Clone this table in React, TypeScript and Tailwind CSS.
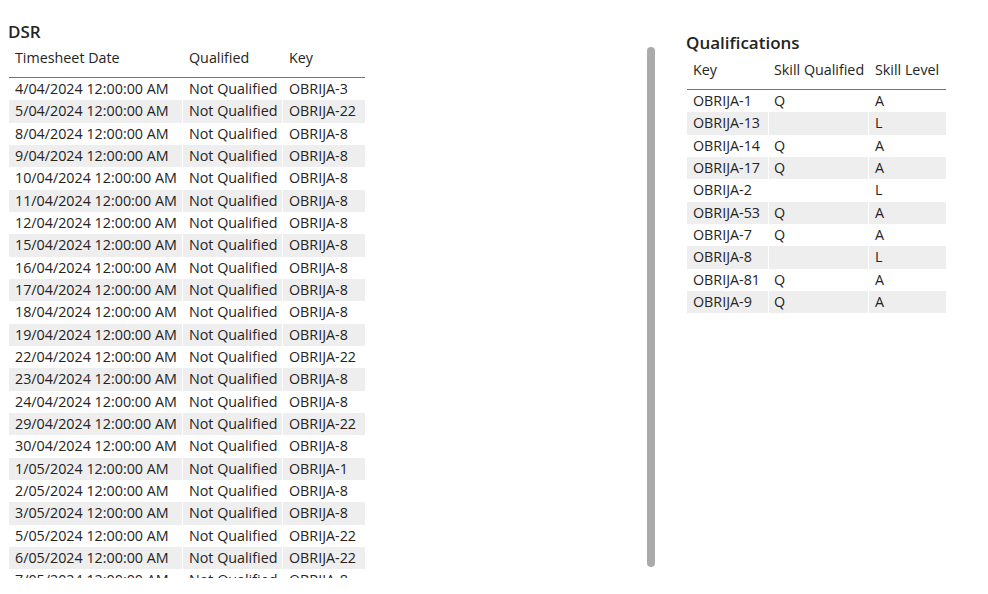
import React from "react";

const dsrRows: [string, string][] = [
  ["4/04/2024", "OBRIJA-3"],
  ["5/04/2024", "OBRIJA-22"],
  ["8/04/2024", "OBRIJA-8"],
  ["9/04/2024", "OBRIJA-8"],
  ["10/04/2024", "OBRIJA-8"],
  ["11/04/2024", "OBRIJA-8"],
  ["12/04/2024", "OBRIJA-8"],
  ["15/04/2024", "OBRIJA-8"],
  ["16/04/2024", "OBRIJA-8"],
  ["17/04/2024", "OBRIJA-8"],
  ["18/04/2024", "OBRIJA-8"],
  ["19/04/2024", "OBRIJA-8"],
  ["22/04/2024", "OBRIJA-22"],
  ["23/04/2024", "OBRIJA-8"],
  ["24/04/2024", "OBRIJA-8"],
  ["29/04/2024", "OBRIJA-22"],
  ["30/04/2024", "OBRIJA-8"],
  ["1/05/2024", "OBRIJA-1"],
  ["2/05/2024", "OBRIJA-8"],
  ["3/05/2024", "OBRIJA-8"],
  ["5/05/2024", "OBRIJA-22"],
  ["6/05/2024", "OBRIJA-22"],
  ["7/05/2024", "OBRIJA-8"],
];

const qualRows: [string, string, string][] = [
  ["OBRIJA-1", "Q", "A"],
  ["OBRIJA-13", "", "L"],
  ["OBRIJA-14", "Q", "A"],
  ["OBRIJA-17", "Q", "A"],
  ["OBRIJA-2", "", "L"],
  ["OBRIJA-53", "Q", "A"],
  ["OBRIJA-7", "Q", "A"],
  ["OBRIJA-8", "", "L"],
  ["OBRIJA-81", "Q", "A"],
  ["OBRIJA-9", "Q", "A"],
];

const font = { fontFamily: '"Open Sans", "Liberation Sans", sans-serif' };

export default function App() {
  return (
    <div className="w-[988px] h-[594px] bg-white flex text-[#252423] overflow-hidden" style={font}>
      {/* DSR visual */}
      <div className="w-[647px] pt-[20px] pl-[8px]">
        <h2 className="h-[24px] leading-[24px] text-[17px] font-semibold">DSR</h2>
        <div className="ml-[1px] w-[356px] mt-[3px] text-[14.3px]">
          <div className="flex h-[31px] border-b border-[#118dff] leading-[22px]">
            <div className="w-[174px] pl-[6px]">Timesheet Date</div>
            <div className="w-[100px] pl-[6px]">Qualified</div>
            <div className="w-[82px] pl-[6px]">Key</div>
          </div>
          <div className="h-[500px] overflow-hidden">
            {dsrRows.map(([date, key], i) => (
              <div
                key={date}
                className={`flex h-[22.33px] leading-[22.33px] whitespace-nowrap ${
                  i % 2 === 1 ? "bg-[#eeeeee]" : "bg-white"
                }`}
              >
                <div className="w-[174px] pl-[6px] border-r border-white">{date} 12:00:00 AM</div>
                <div className="w-[100px] pl-[6px] border-r border-white">Not Qualified</div>
                <div className="w-[82px] pl-[6px]">{key}</div>
              </div>
            ))}
          </div>
        </div>
      </div>

      {/* scrollbar */}
      <div className="w-[8px] h-[520px] mt-[47px] rounded-full bg-[#aaaaaa]" />

      {/* Qualifications visual */}
      <div className="pt-[31px] pl-[31px]">
        <h2 className="h-[24px] leading-[24px] text-[17px] font-semibold">Qualifications</h2>
        <div className="ml-[1px] w-[259px] mt-[4px] text-[14.3px]">
          <div className="flex h-[31px] border-b border-[#118dff] leading-[22px] whitespace-nowrap">
            <div className="w-[82px] pl-[6px]">Key</div>
            <div className="w-[100px] pl-[5px]">Skill Qualified</div>
            <div className="w-[77px] pl-[6px]">Skill Level</div>
          </div>
          {qualRows.map(([key, q, lvl], i) => (
            <div
              key={key}
              className={`flex h-[22.33px] leading-[22.33px] whitespace-nowrap ${
                i % 2 === 1 ? "bg-[#eeeeee]" : "bg-white"
              }`}
            >
              <div className="w-[82px] pl-[6px] border-r border-white">{key}</div>
              <div className="w-[100px] pl-[5px] border-r border-white">{q}</div>
              <div className="w-[77px] pl-[6px]">{lvl}</div>
            </div>
          ))}
        </div>
      </div>
    </div>
  );
}
